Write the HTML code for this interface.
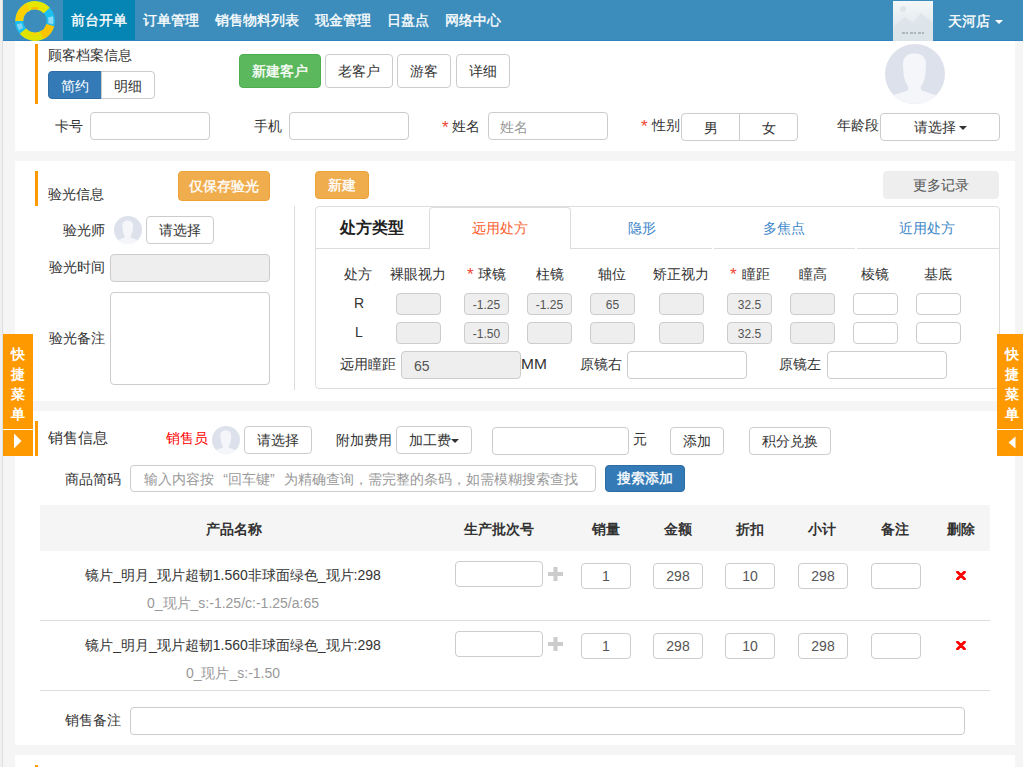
<!DOCTYPE html>
<html><head><meta charset="utf-8">
<style>
*{box-sizing:border-box;margin:0;padding:0}
html,body{width:1023px;height:767px;overflow:hidden}
body{position:relative;background:#f5f5f5;font-family:"Liberation Sans",sans-serif;font-size:14px;color:#333}
.a{position:absolute}
.t{position:absolute;white-space:nowrap;line-height:20px;height:20px}
.panel{position:absolute;left:15px;width:1000px;background:#fff}
.bar{position:absolute;left:35px;width:3px;background:#f90}
.btn{position:absolute;border:1px solid #ccc;border-radius:4px;background:#fff;display:flex;align-items:center;justify-content:center;white-space:nowrap;color:#333;padding-top:1px}
.inp{position:absolute;border:1px solid #ccc;border-radius:4px;background:#fff}
.dis{background:#eee}
.red{color:#f00}
.star{color:#ee4433}
.caret{display:inline-block;width:0;height:0;border-left:4px solid transparent;border-right:4px solid transparent;border-top:4px solid #333;vertical-align:middle;margin-left:3px}
.sm{position:absolute;border:1px solid #ccc;border-radius:4px;background:#eee;height:22px;width:45px;font-size:12px;line-height:21px;padding-top:1px;text-align:center;color:#555}
.hd{position:absolute;font-weight:bold;white-space:nowrap;line-height:20px}
.ci{position:absolute;border:1px solid #ccc;border-radius:4px;background:#fff;height:26px;width:50px;font-size:14px;line-height:25px;text-align:center;color:#555}
</style></head><body>
<!-- left frame strip -->
<div class="a" style="left:0;top:0;width:2px;height:767px;background:#f0f0f0"></div>
<div class="a" style="left:2px;top:0;width:1px;height:767px;background:#dedede"></div>

<!-- NAV -->
<div class="a" style="left:3px;top:0;width:1020px;height:41px;background:#3c8dbc;border-bottom:1px solid #3083bc"></div>
<div class="a" style="left:63px;top:0;width:72px;height:40px;background:#0585b3"></div>
<svg class="a" style="left:14px;top:0" width="42" height="42" viewBox="0 0 42 42"><circle cx="21" cy="21" r="15.8" fill="none" stroke="#1cc0f0" stroke-width="8.2"/><path d="M9.59 4.70 A19.9 19.9 0 0 1 35.79 7.68 L29.69 13.17 A11.7 11.7 0 0 0 14.29 11.42Z" fill="#e6e600"/><path d="M1.10 21.00 A19.9 19.9 0 0 1 12.59 2.96 L16.06 10.40 A11.7 11.7 0 0 0 9.30 21.00Z" fill="#ffd000"/><path d="M17.38 7.48 A14 14 0 0 1 24.62 7.48 L24.03 9.70 A11.7 11.7 0 0 0 17.97 9.70Z" fill="#ffbb00"/><path d="M32.41 37.30 A19.9 19.9 0 0 1 5.76 33.79 L12.04 28.52 A11.7 11.7 0 0 0 27.71 30.58Z" fill="#e0e200"/><path d="M40.22 26.15 A19.9 19.9 0 0 1 29.41 39.04 L25.94 31.60 A11.7 11.7 0 0 0 32.30 24.03Z" fill="#ffc400"/><path d="M24.62 34.52 A14 14 0 0 1 17.38 34.52 L17.97 32.30 A11.7 11.7 0 0 0 24.03 32.30Z" fill="#ffd200"/><path d="M38.87 16.21 A18.5 18.5 0 0 1 39.22 24.21 L34.29 23.34 A13.5 13.5 0 0 0 34.04 17.51Z" fill="#8cdaf6"/><path d="M4.98 30.25 A18.5 18.5 0 0 1 2.78 24.21 L7.71 23.34 A13.5 13.5 0 0 0 9.31 27.75Z" fill="#7fd4f3"/></svg>
<div class="t" style="left:71px;top:10px;color:#fff;-webkit-text-stroke:0.35px #fff">前台开单</div>
<div class="t" style="left:143px;top:10px;color:#fff;-webkit-text-stroke:0.35px #fff">订单管理</div>
<div class="t" style="left:215px;top:10px;color:#fff;-webkit-text-stroke:0.35px #fff">销售物料列表</div>
<div class="t" style="left:315px;top:10px;color:#fff;-webkit-text-stroke:0.35px #fff">现金管理</div>
<div class="t" style="left:387px;top:10px;color:#fff;-webkit-text-stroke:0.35px #fff">日盘点</div>
<div class="t" style="left:445px;top:10px;color:#fff;-webkit-text-stroke:0.35px #fff">网络中心</div>
<svg class="a" style="left:893px;top:1px" width="40" height="40" viewBox="0 0 40 40">
  <defs><linearGradient id="g1" x1="0" y1="0" x2="0" y2="1"><stop offset="0" stop-color="#f4f7f8"/><stop offset="1" stop-color="#d8e2e7"/></linearGradient></defs>
  <rect width="40" height="40" fill="url(#g1)"/>
  <circle cx="10" cy="8" r="3" fill="#dfe6ea"/>
  <path d="M0 26 L12 16 L20 22 L28 12 L40 22 L40 40 L0 40Z" fill="#dbe3e8" opacity="0.8"/>
  <g fill="#9aa8b2" opacity="0.75"><rect x="9" y="31" width="3" height="2"/><rect x="13" y="31" width="2" height="2"/><rect x="17" y="31" width="3" height="2"/><rect x="21" y="31" width="2" height="2"/><rect x="25" y="31" width="3" height="2"/><rect x="29" y="31" width="2" height="2"/></g>
</svg>
<div class="t" style="left:948px;top:11px;color:#fff;-webkit-text-stroke:0.35px #fff">天河店<span class="caret" style="border-top-color:#fff;margin-left:5px"></span></div>

<!-- PANEL 1 -->
<div class="panel" style="top:41px;height:110px"></div>
<div class="bar" style="top:44px;height:60px"></div>
<div class="t" style="left:48px;top:45px">顾客档案信息</div>
<div class="btn" style="left:48px;top:71px;width:54px;height:28px;background:#337ab7;border-color:#2e6da4;color:#fff;border-radius:4px 0 0 4px;padding-top:4px">简约</div>
<div class="btn" style="left:101px;top:71px;width:54px;height:28px;border-radius:0 4px 4px 0;padding-top:4px">明细</div>
<div class="btn" style="left:239px;top:54px;width:82px;height:34px;background:#5cb85c;border-color:#4cae4c;color:#fff;-webkit-text-stroke:0.35px #fff">新建客户</div>
<div class="btn" style="left:325px;top:54px;width:68px;height:34px">老客户</div>
<div class="btn" style="left:397px;top:54px;width:54px;height:34px">游客</div>
<div class="btn" style="left:456px;top:54px;width:54px;height:34px">详细</div>
<svg class="a" style="left:885px;top:44px" width="60" height="60" viewBox="0 0 60 60">
  <defs><clipPath id="cc"><circle cx="30" cy="30" r="30"/></clipPath></defs>
  <circle cx="30" cy="30" r="30" fill="#dde1eb"/>
  <g clip-path="url(#cc)" fill="#f5f6f9">
    <path d="M18 20 C18 12.5 23 9.5 29.5 9.5 C36 9.5 41 12.5 41 20 L40.5 29 C40 35 38 40 35.5 43.5 L36.5 46.5 C43 49 51 51 58 54 L60 60 L0 60 L1 54 C8 51 16 49 22.5 46.5 L23.5 43.5 C21 40 19 35 18.5 29Z"/>
  </g>
</svg>
<div class="t" style="left:55px;top:116px">卡号</div>
<div class="inp" style="left:90px;top:112px;width:120px;height:28px"></div>
<div class="t" style="left:254px;top:116px">手机</div>
<div class="inp" style="left:289px;top:112px;width:120px;height:28px"></div>
<div class="t star" style="left:442px;top:118px;font-size:17px">*</div><div class="t" style="left:452px;top:116px">姓名</div>
<div class="inp" style="left:488px;top:112px;width:120px;height:28px"></div>
<div class="t" style="left:500px;top:117px;color:#999">姓名</div>
<div class="t star" style="left:641px;top:117px;font-size:17px">*</div><div class="t" style="left:652px;top:115px">性别</div>
<div class="btn" style="left:681px;top:113px;width:59px;height:28px;border-radius:4px 0 0 4px;padding-top:3px">男</div>
<div class="btn" style="left:739px;top:113px;width:59px;height:28px;border-radius:0 4px 4px 0;padding-top:3px">女</div>
<div class="t" style="left:837px;top:115px">年龄段</div>
<div class="btn" style="left:880px;top:113px;width:120px;height:28px">请选择<span class="caret"></span></div>

<!-- PANEL 2 -->
<div class="panel" style="top:161px;height:240px"></div>
<div class="bar" style="top:171px;height:35px"></div>
<div class="t" style="left:48px;top:184px">验光信息</div>
<div class="btn" style="left:178px;top:171px;width:92px;height:30px;background:#f0ad4e;border-color:#eea236;color:#fff;-webkit-text-stroke:0.35px #fff">仅保存验光</div>
<div class="btn" style="left:315px;top:171px;width:54px;height:28px;background:#f0ad4e;border-color:#eea236;color:#fff;-webkit-text-stroke:0.35px #fff">新建</div>
<div class="btn" style="left:883px;top:171px;width:116px;height:28px;background:#eee;border-color:#eee;color:#555">更多记录</div>


<div class="t" style="left:63px;top:220px">验光师</div>
<svg class="a" style="left:114px;top:216px" width="28" height="28" viewBox="0 0 60 60">
  <defs><clipPath id="cc2"><circle cx="30" cy="30" r="30"/></clipPath></defs>
  <circle cx="30" cy="30" r="30" fill="#dde1eb"/>
  <g clip-path="url(#cc2)" fill="#f5f6f9">
    <path d="M18 20 C18 12.5 23 9.5 29.5 9.5 C36 9.5 41 12.5 41 20 L40.5 29 C40 35 38 40 35.5 43.5 L36.5 46.5 C43 49 51 51 58 54 L60 60 L0 60 L1 54 C8 51 16 49 22.5 46.5 L23.5 43.5 C21 40 19 35 18.5 29Z"/>
  </g>
</svg>
<div class="btn" style="left:146px;top:216px;width:68px;height:28px">请选择</div>
<div class="t" style="left:49px;top:257px">验光时间</div>
<div class="inp dis" style="left:110px;top:254px;width:160px;height:28px"></div>
<div class="t" style="left:49px;top:328px">验光备注</div>
<div class="inp" style="left:110px;top:292px;width:160px;height:93px"></div>
<div class="a" style="left:294px;top:206px;width:1px;height:184px;background:#ddd"></div>

<!-- Rx box -->
<div class="a" style="left:315px;top:206px;width:685px;height:183px;border:1px solid #ddd;border-radius:4px;background:#fff"></div>
<div class="a" style="left:316px;top:248px;width:683px;height:1px;background:#ddd"></div>
<div class="a" style="left:429px;top:207px;width:142px;height:42px;border:1px solid #ddd;border-bottom:none;border-radius:4px 4px 0 0;background:#fff"></div>
<div class="a" style="left:712px;top:248px;width:2px;height:1px;background:#fff"></div><div class="a" style="left:855px;top:248px;width:2px;height:1px;background:#fff"></div>
<div class="t" style="left:340px;top:218px;font-size:16px;font-weight:bold;color:#222">处方类型</div>
<div class="t" style="left:472px;top:218px;color:#fb5d2c">远用处方</div>
<div class="t" style="left:628px;top:218px;color:#3a86c8">隐形</div>
<div class="t" style="left:763px;top:218px;color:#3a86c8">多焦点</div>
<div class="t" style="left:899px;top:218px;color:#3a86c8">近用处方</div>
<div class="t" style="left:344px;top:264px">处方</div>
<div class="t" style="left:390px;top:264px">裸眼视力</div>
<div class="t star" style="left:467px;top:265px;font-size:17px">*</div><div class="t" style="left:478px;top:264px">球镜</div>
<div class="t" style="left:536px;top:264px">柱镜</div>
<div class="t" style="left:598px;top:264px">轴位</div>
<div class="t" style="left:653px;top:264px">矫正视力</div>
<div class="t star" style="left:730px;top:265px;font-size:17px">*</div><div class="t" style="left:742px;top:264px">瞳距</div>
<div class="t" style="left:799px;top:264px">瞳高</div>
<div class="t" style="left:861px;top:264px">棱镜</div>
<div class="t" style="left:924px;top:264px">基底</div>
<div class="t" style="left:354px;top:293px">R</div>
<div class="t" style="left:355px;top:322px">L</div>
<div class="sm" style="left:396px;top:293px;background:#eee"></div>
<div class="sm" style="left:396px;top:322px;background:#eee"></div>
<div class="sm" style="left:464px;top:293px;background:#eee">-1.25</div>
<div class="sm" style="left:464px;top:322px;background:#eee">-1.50</div>
<div class="sm" style="left:527px;top:293px;background:#eee">-1.25</div>
<div class="sm" style="left:527px;top:322px;background:#eee"></div>
<div class="sm" style="left:590px;top:293px;background:#eee">65</div>
<div class="sm" style="left:590px;top:322px;background:#eee"></div>
<div class="sm" style="left:659px;top:293px;background:#eee"></div>
<div class="sm" style="left:659px;top:322px;background:#eee"></div>
<div class="sm" style="left:727px;top:293px;background:#eee">32.5</div>
<div class="sm" style="left:727px;top:322px;background:#eee">32.5</div>
<div class="sm" style="left:790px;top:293px;background:#eee"></div>
<div class="sm" style="left:790px;top:322px;background:#eee"></div>
<div class="sm" style="left:853px;top:293px;background:#fff"></div>
<div class="sm" style="left:853px;top:322px;background:#fff"></div>
<div class="sm" style="left:916px;top:293px;background:#fff"></div>
<div class="sm" style="left:916px;top:322px;background:#fff"></div>

<div class="t" style="left:340px;top:354px">远用瞳距</div>
<div class="inp dis" style="left:401px;top:351px;width:120px;height:28px;font-size:14px;line-height:26px;padding-left:12px;padding-top:1px;color:#555">65</div>
<div class="t" style="left:521px;top:354px;color:#333;font-size:15.5px">MM</div>
<div class="t" style="left:580px;top:354px">原镜右</div>
<div class="inp" style="left:627px;top:351px;width:120px;height:28px"></div>
<div class="t" style="left:779px;top:354px">原镜左</div>
<div class="inp" style="left:827px;top:351px;width:120px;height:28px"></div>

<!-- PANEL 3 -->
<div class="panel" style="top:411px;height:334px"></div>
<div class="bar" style="top:421px;height:35px"></div>
<div class="t" style="left:48px;top:428px;font-size:15px">销售信息</div>
<div class="t red" style="left:166px;top:428px">销售员</div>
<svg class="a" style="left:212px;top:426px" width="28" height="28" viewBox="0 0 60 60">
  <defs><clipPath id="cc3"><circle cx="30" cy="30" r="30"/></clipPath></defs>
  <circle cx="30" cy="30" r="30" fill="#dde1eb"/>
  <g clip-path="url(#cc3)" fill="#f5f6f9">
    <path d="M18 20 C18 12.5 23 9.5 29.5 9.5 C36 9.5 41 12.5 41 20 L40.5 29 C40 35 38 40 35.5 43.5 L36.5 46.5 C43 49 51 51 58 54 L60 60 L0 60 L1 54 C8 51 16 49 22.5 46.5 L23.5 43.5 C21 40 19 35 18.5 29Z"/>
  </g>
</svg>
<div class="btn" style="left:244px;top:426px;width:68px;height:28px">请选择</div>
<div class="t" style="left:336px;top:430px">附加费用</div>
<div class="btn" style="left:396px;top:426px;width:76px;height:28px">加工费<span class="caret" style="margin-left:0"></span></div>
<div class="inp" style="left:492px;top:427px;width:137px;height:28px"></div>
<div class="t" style="left:633px;top:429px">元</div>
<div class="btn" style="left:670px;top:427px;width:54px;height:28px">添加</div>
<div class="btn" style="left:749px;top:427px;width:82px;height:28px">积分兑换</div>
<div class="t" style="left:65px;top:469px">商品简码</div>
<div class="inp" style="left:130px;top:465px;width:466px;height:27px"></div>
<div class="t" style="left:144px;top:469px;color:#999">输入内容按<span style="display:inline-block;width:14px;text-align:right">“</span>回车键<span style="display:inline-block;width:14px;text-align:left">”</span>为精确查询，需完整的条码，如需模糊搜索查找</div>
<div class="btn" style="left:605px;top:465px;width:80px;height:27px;background:#337ab7;border-color:#2e6da4;color:#fff;-webkit-text-stroke:0.35px #fff">搜索添加</div>

<div class="a" style="left:40px;top:505px;width:950px;height:46px;background:#f5f5f5"></div>
<div class="hd" style="left:206px;top:519px">产品名称</div>
<div class="hd" style="left:464px;top:519px">生产批次号</div>
<div class="hd" style="left:592px;top:519px">销量</div>
<div class="hd" style="left:664px;top:519px">金额</div>
<div class="hd" style="left:736px;top:519px">折扣</div>
<div class="hd" style="left:808px;top:519px">小计</div>
<div class="hd" style="left:881px;top:519px">备注</div>
<div class="hd" style="left:947px;top:519px">删除</div>

<div class="t" style="left:40px;width:386px;text-align:center;top:565px">镜片_明月_现片超韧1.560非球面绿色_现片:298</div>
<div class="t" style="left:40px;width:386px;text-align:center;top:593px;color:#999">0_现片_s:-1.25/c:-1.25/a:65</div>
<div class="inp" style="left:455px;top:561px;width:88px;height:26px"></div>
<svg class="a" style="left:548px;top:567px" width="15" height="14" viewBox="0 0 15 14"><rect x="0" y="5" width="15" height="4" fill="#ccc"/><rect x="5.5" y="0" width="4" height="14" fill="#ccc"/></svg>
<div class="ci" style="left:581px;top:563px">1</div>
<div class="ci" style="left:653px;top:563px">298</div>
<div class="ci" style="left:725px;top:563px">10</div>
<div class="ci" style="left:798px;top:563px">298</div>
<div class="ci" style="left:871px;top:563px"></div>
<svg class="a" style="left:956px;top:571px" width="10" height="9" viewBox="0 0 10 9"><path d="M1.5 1 L8.5 8 M8.5 1 L1.5 8" stroke="#f00" stroke-width="2.8" stroke-linecap="round"/></svg>
<div class="a" style="left:40px;top:620px;width:950px;height:1px;background:#ddd"></div>

<div class="t" style="left:40px;width:386px;text-align:center;top:635px">镜片_明月_现片超韧1.560非球面绿色_现片:298</div>
<div class="t" style="left:40px;width:386px;text-align:center;top:663px;color:#999">0_现片_s:-1.50</div>
<div class="inp" style="left:455px;top:631px;width:88px;height:26px"></div>
<svg class="a" style="left:548px;top:637px" width="15" height="14" viewBox="0 0 15 14"><rect x="0" y="5" width="15" height="4" fill="#ccc"/><rect x="5.5" y="0" width="4" height="14" fill="#ccc"/></svg>
<div class="ci" style="left:581px;top:633px">1</div>
<div class="ci" style="left:653px;top:633px">298</div>
<div class="ci" style="left:725px;top:633px">10</div>
<div class="ci" style="left:798px;top:633px">298</div>
<div class="ci" style="left:871px;top:633px"></div>
<svg class="a" style="left:956px;top:641px" width="10" height="9" viewBox="0 0 10 9"><path d="M1.5 1 L8.5 8 M8.5 1 L1.5 8" stroke="#f00" stroke-width="2.8" stroke-linecap="round"/></svg>
<div class="a" style="left:40px;top:690px;width:950px;height:1px;background:#ddd"></div>

<div class="t" style="left:65px;top:710px">销售备注</div>
<div class="inp" style="left:130px;top:707px;width:835px;height:28px"></div>

<!-- PANEL 4 -->
<div class="panel" style="top:755px;height:20px"></div>
<div class="bar" style="top:765px;height:10px"></div>

<!-- side tabs -->
<div class="a" style="left:3px;top:334px;width:30px;height:122px;background:#f90"></div>
<div class="a" style="left:3px;top:429px;width:30px;height:1px;background:#fff"></div>
<div class="a" style="left:3px;top:344px;width:30px;line-height:20px;color:#fff;text-align:center;font-size:14px;font-weight:bold">快<br>捷<br>菜<br>单</div>
<svg class="a" style="left:14px;top:433px" width="8" height="16" viewBox="0 0 8 16"><path d="M0 0.5 L7.5 8 L0 15.5Z" fill="#fff"/></svg>
<div class="a" style="left:997px;top:334px;width:26px;height:122px;background:#f90"></div>
<div class="a" style="left:997px;top:429px;width:26px;height:1px;background:#fff"></div>
<div class="a" style="left:1002px;top:344px;width:20px;line-height:20px;color:#fff;text-align:center;font-size:14px;font-weight:bold">快<br>捷<br>菜<br>单</div>
<svg class="a" style="left:1008px;top:436px" width="8" height="13" viewBox="0 0 8 13"><path d="M7.5 0.5 L0.5 6.5 L7.5 12.5Z" fill="#fff"/></svg>

</body></html>
